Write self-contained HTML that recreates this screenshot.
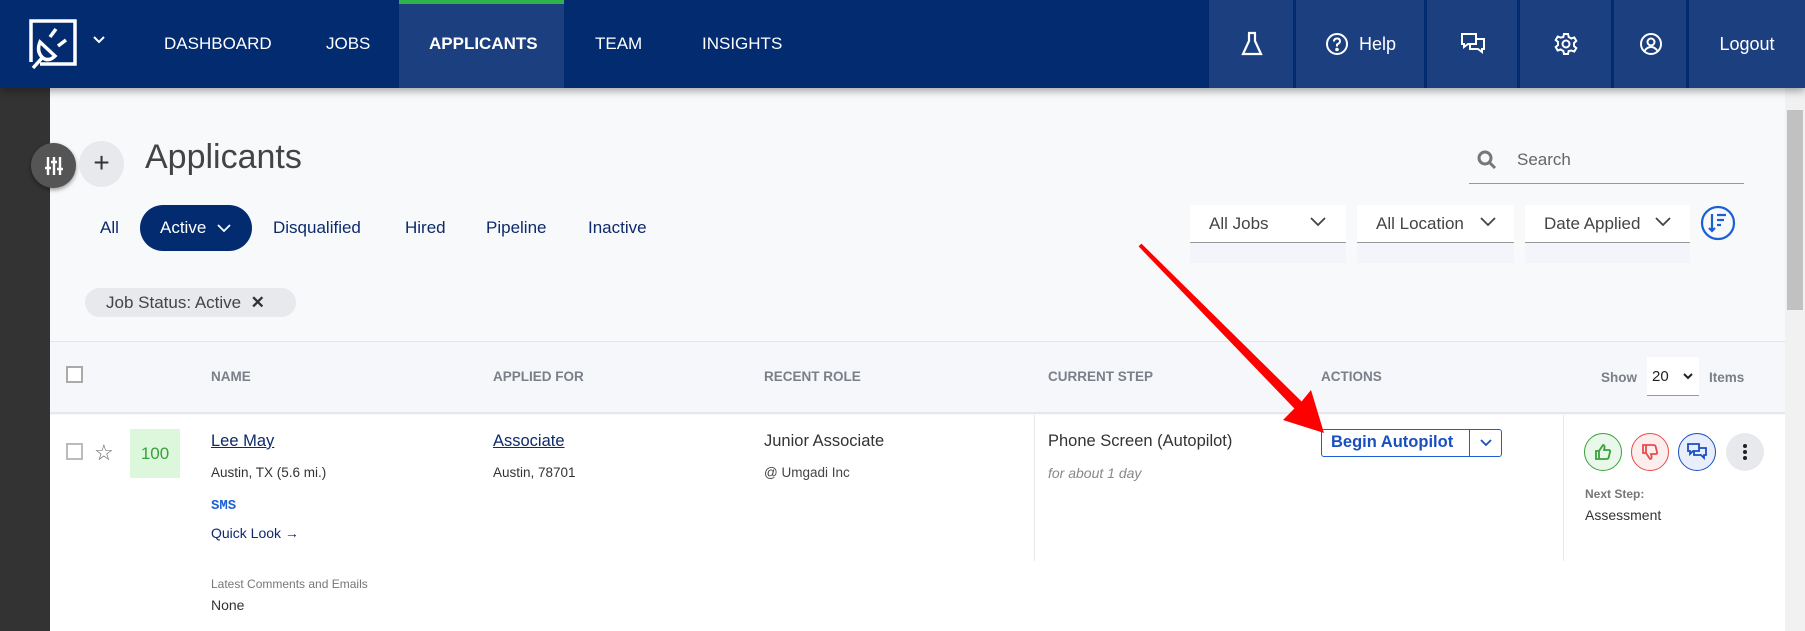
<!DOCTYPE html>
<html><head><meta charset="utf-8"><style>
*{box-sizing:border-box;margin:0;padding:0}
body{width:1805px;height:631px;overflow:hidden;background:#f8f9fb;font-family:"Liberation Sans",sans-serif;position:relative;color:#333}
.a{position:absolute;white-space:nowrap}
.nav{position:absolute;left:0;top:0;width:1805px;height:88px;background:#022b70;box-shadow:0 3px 8px rgba(0,0,0,.35);z-index:5}
.nt{position:absolute;top:34px;color:#fff;font-size:17px}
.rb{position:absolute;top:0;height:88px;background:#1c3f7f;border-left:3px solid #022b70;display:flex;align-items:center;justify-content:center;color:#fff;font-size:18px}
.hdr{font-size:13.5px;font-weight:bold;color:#7a7f88;top:369px}
.cb{position:absolute;width:17px;height:17px;border:2px solid #aaa;background:#fff}
.dd{position:absolute;top:205px;height:38px;background:#fff;border-bottom:1px solid #999;font-size:17px;color:#444;padding:9px 0 0 19px}
.dd2{position:absolute;top:243px;height:20px;background:#f3f5fa}
.ic{position:absolute;width:38px;height:38px;border-radius:50%;top:433px;display:flex;align-items:center;justify-content:center}
</style></head><body>
<div class="nav">
  <svg class="a" style="left:28px;top:18px" width="50" height="52" viewBox="0 0 50 52" fill="none" stroke="#fff" stroke-width="3.5">
    <path d="M12 46 H47 V3 H3 V44"/>
    <path d="M5 50 L14 40"/><path d="M12 24 L27 38 Q21 44 15 40 Q8 34 12 24Z"/><path d="M22 19 L28 11 M30 28 L38 22"/>
  </svg>
  <svg class="a" style="left:93px;top:36px" width="12" height="8" viewBox="0 0 12 8"><path d="M1 1 L6 6 L11 1" stroke="#fff" stroke-width="2" fill="none"/></svg>
  <div class="nt" style="left:164px">DASHBOARD</div>
  <div class="nt" style="left:326px">JOBS</div>
  <div class="a" style="left:399px;top:0;width:165px;height:88px;background:#1c3f7f;border-top:4px solid #2db34a"></div>
  <div class="nt" style="left:429px;font-weight:bold">APPLICANTS</div>
  <div class="nt" style="left:595px">TEAM</div>
  <div class="nt" style="left:702px">INSIGHTS</div>
  <div class="rb" style="left:1206px;width:88px"><svg width="22" height="26" viewBox="0 0 22 26" fill="none" stroke="#fff" stroke-width="2.2"><path d="M7 2H15M8 2V10L2 23H20L14 10V2"/></svg></div>
  <div class="rb" style="left:1293px;width:132px"><svg width="24" height="24" viewBox="0 0 24 24" fill="none" stroke="#fff" stroke-width="2"><circle cx="12" cy="12" r="10"/><path d="M9 9.5Q9 6.5 12 6.5Q15 6.5 15 9.2Q15 11 12 12.5V14.5"/><circle cx="12" cy="17.5" r=".8" fill="#fff"/></svg><span style="margin-left:10px">Help</span></div>
  <div class="rb" style="left:1424px;width:94px"><svg width="26" height="24" viewBox="0 0 26 24" fill="none" stroke="#fff" stroke-width="2"><path d="M2 2H16V12H8L4 15V12H2Z"/><path d="M16 7H24V17H22V20L18 17H10V12"/></svg></div>
  <div class="rb" style="left:1517px;width:95px"><svg width="24" height="24" viewBox="0 0 24 24" fill="none" stroke="#fff" stroke-width="2"><circle cx="12" cy="12" r="3.5"/><path d="M10 2h4l.7 3 2.6 1.5 3-1 2 3.4-2.3 2.1v3l2.3 2.1-2 3.4-3-1L14.7 19 14 22h-4l-.7-3-2.6-1.5-3 1-2-3.4L4 13v-3L1.7 8l2-3.4 3 1L9.3 5z"/></svg></div>
  <div class="rb" style="left:1611px;width:76px"><svg width="24" height="24" viewBox="0 0 24 24" fill="none" stroke="#fff" stroke-width="2"><circle cx="12" cy="12" r="10"/><circle cx="12" cy="10" r="3.5"/><path d="M5.5 19Q8 15 12 15Q16 15 18.5 19"/></svg></div>
  <div class="rb" style="left:1686px;width:119px">Logout</div>
</div>
<div class="a" style="left:0;top:88px;width:50px;height:543px;background:#333"></div>
<div class="a" style="left:1785px;top:88px;width:20px;height:543px;background:#f1f1f1"></div>
<div class="a" style="left:1787px;top:110px;width:16px;height:200px;background:#c1c1c1"></div>
<div class="a" style="left:31px;top:143px;width:45px;height:45px;border-radius:50%;background:#555;box-shadow:0 2px 4px rgba(0,0,0,.4);display:flex;align-items:center;justify-content:center"><svg width="18" height="20" viewBox="0 0 18 20" stroke="#fff" stroke-width="2.4"><path d="M3 1V19M9 1V19M15 1V19M0 12H6M6 6H12M12 13H18"/></svg></div>
<div class="a" style="left:79px;top:141px;width:45px;height:46px;border-radius:50%;background:#e8e9ec;font-size:28px;color:#333;text-align:center;line-height:44px">+</div>
<div class="a" style="left:145px;top:138px;font-size:34px;color:#444">Applicants</div>
<svg class="a" style="left:1477px;top:150px" width="20" height="20" viewBox="0 0 20 20" fill="none" stroke="#777" stroke-width="3"><circle cx="8" cy="8" r="6"/><path d="M12.5 12.5L18 18"/></svg>
<div class="a" style="left:1517px;top:150px;font-size:17px;color:#666">Search</div>
<div class="a" style="left:1469px;top:183px;width:275px;height:1px;background:#999"></div>
<div class="a" style="left:100px;top:218px;font-size:17px;color:#0d2a6b">All</div>
<div class="a" style="left:140px;top:205px;width:112px;height:46px;border-radius:23px;background:#022b70;color:#fff;font-size:17px;padding:13px 0 0 20px">Active <svg width="14" height="9" viewBox="0 0 14 9" style="margin-left:6px"><path d="M1 1L7 7L13 1" stroke="#fff" stroke-width="1.8" fill="none"/></svg></div>
<div class="a" style="left:273px;top:218px;font-size:17px;color:#0d2a6b">Disqualified</div>
<div class="a" style="left:405px;top:218px;font-size:17px;color:#0d2a6b">Hired</div>
<div class="a" style="left:486px;top:218px;font-size:17px;color:#0d2a6b">Pipeline</div>
<div class="a" style="left:588px;top:218px;font-size:17px;color:#0d2a6b">Inactive</div>
<div class="dd" style="left:1190px;width:156px">All Jobs</div><div class="dd2" style="left:1190px;width:156px"></div>
<div class="dd" style="left:1357px;width:157px">All Location</div><div class="dd2" style="left:1357px;width:157px"></div>
<div class="dd" style="left:1525px;width:165px">Date Applied</div><div class="dd2" style="left:1525px;width:165px"></div>
<svg class="a" style="left:1310px;top:217px" width="16" height="10"><path d="M1 1L8 8L15 1" stroke="#444" stroke-width="1.8" fill="none"/></svg>
<svg class="a" style="left:1480px;top:217px" width="16" height="10"><path d="M1 1L8 8L15 1" stroke="#444" stroke-width="1.8" fill="none"/></svg>
<svg class="a" style="left:1655px;top:217px" width="16" height="10"><path d="M1 1L8 8L15 1" stroke="#444" stroke-width="1.8" fill="none"/></svg>
<svg class="a" style="left:1700px;top:205px" width="36" height="36" viewBox="0 0 36 36" fill="none" stroke="#1a5fd6" stroke-width="2.2"><circle cx="18" cy="18" r="16"/><path d="M12 9V26M9 23L12 26L15 23M17 10H26M17 15H24M17 20H21"/></svg>
<div class="a" style="left:85px;top:288px;width:211px;height:29px;border-radius:15px;background:#e8e9ec;font-size:17px;color:#444;padding:5px 0 0 21px">Job Status: Active&nbsp; <b style="color:#333">✕</b></div>
<div class="a" style="left:50px;top:341px;width:1735px;height:73px;background:#f5f7fb;border-top:1px solid #e3e5ea;border-bottom:2px solid #e5e7eb"></div>
<div class="cb" style="left:66px;top:366px"></div>
<div class="a hdr" style="left:211px">NAME</div>
<div class="a hdr" style="left:493px">APPLIED FOR</div>
<div class="a hdr" style="left:764px">RECENT ROLE</div>
<div class="a hdr" style="left:1048px">CURRENT STEP</div>
<div class="a hdr" style="left:1321px">ACTIONS</div>
<div class="a hdr" style="left:1601px;top:370px">Show</div>
<div class="a" style="left:1647px;top:357px;width:52px;height:39px;background:#fff;border-bottom:1px solid #999;font-size:15px;color:#222;padding:11px 0 0 5px">20</div>
<svg class="a" style="left:1683px;top:373px" width="10" height="7"><path d="M1 1L5 5L9 1" stroke="#222" stroke-width="2" fill="none"/></svg>
<div class="a hdr" style="left:1709px;top:370px">Items</div>
<div class="a" style="left:50px;top:415px;width:1735px;height:216px;background:#fff"></div>
<div class="a" style="left:1034px;top:415px;width:1px;height:146px;background:#e5e7eb"></div>
<div class="a" style="left:1563px;top:415px;width:1px;height:146px;background:#e5e7eb"></div>
<div class="cb" style="left:66px;top:443px;border-color:#bbb"></div>
<div class="a" style="left:94px;top:440px;font-size:22px;color:#666">☆</div>
<div class="a" style="left:130px;top:429px;width:50px;height:49px;background:#dcf7dc;color:#3aa13a;font-size:17px;text-align:center;line-height:49px">100</div>
<div class="a" style="left:211px;top:432px;font-size:16.5px;color:#0d2a6b;text-decoration:underline">Lee May</div>
<div class="a" style="left:211px;top:465px;font-size:13.5px;color:#333">Austin, TX (5.6 mi.)</div>
<div class="a" style="left:211px;top:498px;font-size:14px;color:#1a5fd6;font-weight:bold;font-family:'Liberation Mono',monospace">SMS</div>
<div class="a" style="left:211px;top:525px;font-size:14px;color:#0d2a6b">Quick Look →</div>
<div class="a" style="left:211px;top:577px;font-size:12px;color:#777">Latest Comments and Emails</div>
<div class="a" style="left:211px;top:597px;font-size:14px;color:#333">None</div>
<div class="a" style="left:493px;top:432px;font-size:16.5px;color:#0d2a6b;text-decoration:underline">Associate</div>
<div class="a" style="left:493px;top:465px;font-size:13.5px;color:#333">Austin, 78701</div>
<div class="a" style="left:764px;top:432px;font-size:16.5px;color:#333">Junior Associate</div>
<div class="a" style="left:764px;top:465px;font-size:13.5px;color:#444">@ Umgadi Inc</div>
<div class="a" style="left:1048px;top:432px;font-size:16.5px;color:#333">Phone Screen (Autopilot)</div>
<div class="a" style="left:1048px;top:465px;font-size:14px;color:#888;font-style:italic">for about 1 day</div>
<div class="a" style="left:1321px;top:429px;width:181px;height:28px;border:1px solid #1a5fd6;border-radius:3px;background:#fff"></div>
<div class="a" style="left:1331px;top:433px;font-size:16.5px;color:#1a4fc0;font-weight:bold">Begin Autopilot</div>
<div class="a" style="left:1469px;top:429px;width:1px;height:28px;background:#1a5fd6"></div>
<svg class="a" style="left:1480px;top:439px" width="12" height="8"><path d="M1 1L6 6L11 1" stroke="#1a4fc0" stroke-width="1.8" fill="none"/></svg>
<div class="ic" style="left:1584px;border:1.5px solid #3aa13a;background:#e9f8ea"><svg width="18" height="18" viewBox="0 0 18 18" fill="none" stroke="#3aa13a" stroke-width="1.8"><path d="M2 8H5V16H2ZM5 8L9 2Q11 2 10.5 5L10 7H15Q16.5 7.5 16 9L14.5 15Q14 16 12.5 16H5"/></svg></div>
<div class="ic" style="left:1631px;border:1.5px solid #e84b4b;background:#fdeeee"><svg width="18" height="18" viewBox="0 0 18 18" fill="none" stroke="#e84b4b" stroke-width="1.8"><path d="M2 2H5V10H2ZM5 10L9 16Q11 16 10.5 13L10 11H15Q16.5 10.5 16 9L14.5 3Q14 2 12.5 2H5"/></svg></div>
<div class="ic" style="left:1678px;border:1.5px solid #1a4fc0;background:#e8eefb"><svg width="20" height="18" viewBox="0 0 20 18" fill="none" stroke="#1a4fc0" stroke-width="1.8"><path d="M1 1H12V8H6L3 11V8H1Z"/><path d="M12 5H19V12H17V15L14 12H7V8"/></svg></div>
<div class="ic" style="left:1726px;background:#e8e9ec"><svg width="4" height="16"><circle cx="2" cy="2" r="2" fill="#222"/><circle cx="2" cy="8" r="2" fill="#222"/><circle cx="2" cy="14" r="2" fill="#222"/></svg></div>
<div class="a" style="left:1585px;top:487px;font-size:12px;font-weight:bold;color:#777">Next Step:</div>
<div class="a" style="left:1585px;top:507px;font-size:14px;color:#333">Assessment</div>
<svg class="a" style="left:0;top:0;z-index:6" width="1805" height="631"><polygon points="1138.6,246.4 1141.4,243.6 1301.6,401.5 1311,390 1324,433 1283,420 1294.4,408.5" fill="#f00"/></svg>
</body></html>
